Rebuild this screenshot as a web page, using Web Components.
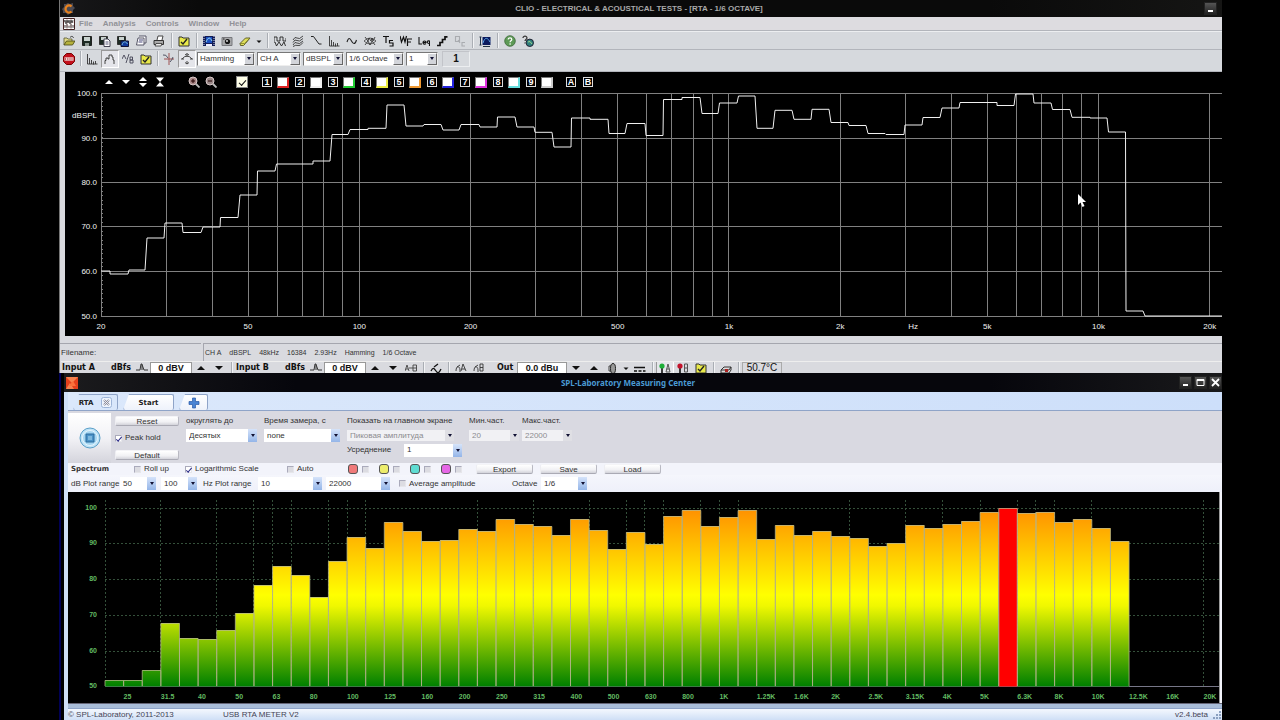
<!DOCTYPE html>
<html lang="en">
<head>
<meta charset="utf-8">
<title>RTA workspace</title>
<style>
  html { background: #000; }
  body { margin: 0; min-height: 100vh; background: #000; overflow: hidden; font: 8px/10px "Liberation Sans", Arial, sans-serif; color: #222; }
</style>
</head>
<body>
<app-desktop></app-desktop>
<script>
const BASE = `*{box-sizing:border-box} button,input,select{font:inherit;color:inherit;margin:0;padding:0;border:0;background:none;border-radius:0}`;
function define(name, css, html) {
  const tpl = document.createElement('template');
  customElements.define(name, class extends HTMLElement {
    connectedCallback() {
      if (this.shadowRoot) return;
      tpl.innerHTML = `<style>${BASE}${css}</style>${typeof html === 'function' ? html(this) : html}`;
      this.attachShadow({ mode: 'open' }).append(tpl.content.cloneNode(true));
    }
  });
}

/* ---------- icons, all on a 12 x 12 grid ---------- */
const note = '<path d="M1 2h3l1 1h6v8H1z" fill="#e9e94a" stroke="#333"/><path d="M3 7l2 2 4-5" fill="none" stroke="#222" stroke-width="1.4"/>';
const disk = '<path d="M1.500 1.500h9v9h-9z" fill="#1d2b24" stroke="#222"/><path d="M3 2h6v4H3z" fill="#c9d2cf"/><path d="M4 8h4v3H4z" fill="#8b9691"/>';
const smallDisk = '<path d="M.5 1.500h8v8h-8z" fill="#1d2b24" stroke="#333"/><path d="M2 2h5v3H2z" fill="#c9d2cf"/>';
const ICONS = {
  app: '<path d="M.5.5h11v11H.5z" fill="#fff" stroke="#422"/><path d="M1 4h10M1 8h10M4 1v10M8 1v10" stroke="#a77" stroke-width=".6"/><path d="M1 4l1-2 1 4 1-4 1 3 1-3 1 4 1-4 1 3 1-3M2 10V7M4 10V6M6 10V8M8 10V6M10 10V7" fill="none" stroke="#333" stroke-width=".8"/>',
  open: '<path d="M1 10V3h3l1 1h4v2" fill="#e3dc8a" stroke="#555533" stroke-width=".8"/><path d="M1 10l2.500-4H12L9.500 10z" fill="#b5b13d" stroke="#444411" stroke-width=".8"/><path d="M7 2.500c2-2 3-1 3.500.5" fill="none" stroke="#333"/>',
  disk,
  diskDoc: smallDisk + '<path d="M5 4h4l2 2v5.500H5z" fill="#fff" stroke="#445"/><path d="M6.500 7h3M6.500 9h3" stroke="#557"/>',
  diskBlue: smallDisk + '<path d="M4 6h7.500v5.500H4z" fill="#123a9c" stroke="#113"/><path d="M5 10c1-4 4-4 5.500-1" fill="none" stroke="#7bd"/>',
  pages: '<path d="M4 1h7v7H9M3 3h6v7H1.500z" fill="#fff" stroke="#556"/><path d="M4 5h4M3.500 7h4" stroke="#447"/>',
  print: '<path d="M4 5l1-4h5L9 5" fill="#fff" stroke="#444"/><path d="M1 5.500h9.500v4H1z" fill="#aaa" stroke="#333"/><path d="M3 8.500h6l-1 2.500H2z" fill="#eee" stroke="#333" stroke-width=".8"/>',
  note,
  film: '<path d="M0 1h12v10H0z" fill="#111c55"/><path d="M3 2h6v6H3z" fill="#1d50c0"/><path d="M3 7c2-5 4-5 6-1" stroke="#9de" fill="none"/><path d="M1 1v10M11 1v10" stroke="#dde" stroke-dasharray="1 1"/><path d="M3 10h6" stroke="#eef" stroke-width="2"/>',
  camera: '<path d="M1 2.500h10v8H1z" fill="#a8a9ab" stroke="#77787c"/><circle cx="6.500" cy="6.500" r="2.600" fill="#151515"/><circle cx="6" cy="6" r=".9" fill="#eee"/><path d="M2 4h1.500" stroke="#222"/>',
  eraser: '<path d="M1 8.500L6.500 3h4.500L6.500 8.500 4.500 10.500H1.500z" fill="#dede5a" stroke="#555522" stroke-width=".9"/><path d="M1 8.500h4.500L11 3" fill="none" stroke="#777722" stroke-width=".7"/>',
  drop: '<path d="M3.500 5.500h5l-2.500 2.500z" fill="#111"/>',
  square: '<path d="M0 6V2h3v4h3V2h3v4h3V3M0 7h1l1.500 4L5 7l2.500 4L10 7l1.500 4" fill="none" stroke="#222" stroke-width=".9"/>',
  waterfall: '<path d="M1 5q2-4 4-2t6-2M1 7.500q2-4 4-2t6-2M1 10q2-4 4-2t6-2M1 11.500q3-2 5-1t5-3" fill="none" stroke="#222" stroke-width=".8"/>',
  slope: '<path d="M1 1.500h2.500L9 9h2.500" fill="none" stroke="#222"/>',
  bars: '<path d="M1.500 1v10h10M3.500 5v6M5.500 7v4M7.500 8.500v3M9.500 8v3" fill="none" stroke="#333" stroke-width=".9"/>',
  sine: '<path d="M1 7c1.500-5 3-4 4.500-1s3.500 4 5-1" fill="none" stroke="#222" stroke-width="1.100"/>',
  noise: '<path d="M0 6q6-6 12 0q-6 6-12 0" fill="none" stroke="#444" stroke-width=".8"/><path d="M1 2l3 4 1-3 2 3 1-3 1 3 2-4M1 10l3-4 2 4 2-4 3 4" fill="none" stroke="#222" stroke-width=".8"/>',
  ts: '<path d="M1 1.500h6M4 1.500V8M11 5.500H7.500v2.500H11v3H7.500" fill="none" stroke="#111" stroke-width="1.200"/>',
  wf: '<path d="M0 1l1.500 6L3.500 2l1.500 5L6.500 1M7.500 11V4H12M7.500 7H11" fill="none" stroke="#111" stroke-width="1.200"/>',
  leq: '<path d="M1 2v7h3M8 8.500c-1 1-3 1-3-1s3-2 3 0H5M11.500 5.500V11M11.500 6c-3-1-3 3 0 2.500" fill="none" stroke="#111" stroke-width="1.100"/>',
  stair: '<path d="M1 10.500h3V7.500h2.500V4.500H9V1.800h2.500" fill="none" stroke="#111" stroke-width="1.700"/>',
  qc: '<path d="M1.500 1.500h4v5h-4zM4 5l2 3M11 7.500H8v3.500h3" fill="none" stroke="#a9acb0" stroke-width="1.100"/>',
  measure: '<path d="M3.500 2h8v8h-8z" fill="#0b1a5e"/><path d="M4 8c2-7 5-5 7-1" stroke="#5aa6e8" fill="none"/><path d="M1.500 2v8M.5 2h2M.5 10h2M4 11.500h7" stroke="#234"/>',
  help: '<circle cx="6" cy="6" r="5.300" fill="#5d9a56" stroke="#3d6a3a" stroke-width=".8"/><path d="M4.200 4.600c0-2.400 3.600-2.200 3.600 0 0 1.300-1.700 1.200-1.700 2.600M6.100 8.300v1.400" fill="none" stroke="#fff" stroke-width="1.200"/>',
  about: '<circle cx="7.800" cy="7.800" r="3.700" fill="#2f7f7c" stroke="#223"/><path d="M6 7q2-2 4 2" stroke="#9ed28a" fill="none"/><path d="M1 3c0-2.500 4-2.500 4 0 0 1-2 1.500-2 3M3 7.500v1" fill="none" stroke="#333" stroke-width="1.200"/>',
  stop: '<path d="M3.500.5h5l3 3v5l-3 3h-5l-3-3v-5z" fill="#c3101c" stroke="#700"/><path d="M1.500 4.300h9v3.400h-9z" fill="#f3d9d9"/><path d="M2.500 4.800v2.400M4.800 4.800v2.400M7 4.800v2.400M9 4.800v2.400" stroke="#a22" stroke-width=".7"/>',
  rta: '<path d="M1 11V7.500h1V5h2v1h1V2h3v2h1v3h1v4" fill="none" stroke="#333" stroke-width=".9"/>',
  ab: '<path d="M0 6l2-4 2 4M7 1L4 10M8 4v6h3V7H8h2.500V4z" fill="none" stroke="#445" stroke-width=".9"/>',
  phase: '<path d="M1 6h10M6 0v12" stroke="#944" stroke-width=".9"/><path d="M0 2q3-1 5 3M7 9q2-2 3-5" stroke="#445" fill="none" stroke-width=".9"/>',
  mic: '<path d="M1 6q5-6 10 0M0 6h3M9 6h3M6 1v3M4 2l2-1.500L8 2M6 8v3M4 9.500l2 1.500 2-1.500" fill="none" stroke="#333" stroke-width=".9"/>',
  up: '<path d="M2 8l4-4 4 4z" fill="currentColor"/>', down: '<path d="M2 4h8L6 8z" fill="currentColor"/>',
  expand: '<path d="M2 5l4-4 4 4zM2 7h8l-4 4z" fill="currentColor"/>',
  shrink: '<path d="M2 1.500h8L6 6zM2 10.500h8L6 6z" fill="currentColor"/>',
  zoomIn: '<circle cx="5" cy="5" r="4" fill="#a88" stroke="#d8c8c8"/><path d="M8 8l3.500 3.500" stroke="#bbb" stroke-width="1.800"/><path d="M3 5h4M5 3v4" stroke="#200"/>',
  zoomOut: '<circle cx="5" cy="5" r="4" fill="#988" stroke="#d8c8c8"/><path d="M8 8l3.500 3.500" stroke="#bbb" stroke-width="1.800"/><path d="M3 5h4" stroke="#200"/>',
  impulse: '<path d="M0 8h4l1-6h1v6M6 2.500L8 8h4" fill="none" stroke="#333"/>',
  aMinusB: '<path d="M0 9l2-6 2 6M1 7h2M4 6h4M8 3v6h3.500V3zM8 6h3.500" fill="none" stroke="#444" stroke-width=".9"/>',
  tone: '<path d="M1 9c2-4 3-3 5 0s3 2 5-2M4 5l4-3" fill="none" stroke="#111" stroke-width="1.300"/>',
  loopA: '<path d="M1 9c0-6 4-5 4-1v2M6 9l2-7 3 7M7 7h3M2 5l3-2" fill="none" stroke="#333" stroke-width=".9"/>',
  loopB: '<path d="M1 9c0-6 4-5 4-1v2M7 2h3v7H7zM7 5.500h3M2 5l3-2" fill="none" stroke="#333" stroke-width=".9"/>',
  speaker: '<path d="M3 4h3M3 9h3M3 4v5" stroke="#444" fill="none"/><ellipse cx="7" cy="6.500" rx="2.500" ry="5" fill="#999" stroke="#222"/>',
  dc: '<path d="M0 5.500h11M0 9h3M4.500 9h3M9 9h2.500" stroke="#111" stroke-width="1.300"/>',
  micA: '<path d="M3 6v6" stroke="#111" stroke-width="1.600"/><circle cx="3" cy="4" r="2.600" fill="#1cae37"/><path d="M7 10l2-8 2 8zM7.500 7h3" fill="none" stroke="#555"/>',
  micB: '<path d="M3 6v6" stroke="#111" stroke-width="1.600"/><circle cx="3" cy="4" r="2.600" fill="#c4132c"/><path d="M7.500 2h3v8h-3zM7.500 6h3" fill="none" stroke="#555"/>',
  chip: '<path d="M1 8l3-3h7L9 8zM1 8v3h8l2-3V5" fill="#ddd" stroke="#333"/><path d="M5 7h3v3H5z" fill="#a22"/>'
};
const svg = (name, size = 12) => `<svg width="${size}" height="${size}" viewBox="0 0 12 12" aria-hidden="true">${ICONS[name]}</svg>`;

define('tool-button', `
  :host{display:block;width:18px;flex:none}
  :host([narrow]){width:10px}
  button{display:flex;width:100%;height:18px;align-items:center;justify-content:center;overflow:hidden}
  :host([pressed]) button{background:#e4e5ea;border:1px solid;border-color:#999 #fff #fff #999}
  svg{flex:none}`,
  el => `<button type="button" aria-label="${el.getAttribute('icon')}">${svg(el.getAttribute('icon'))}</button>`);

define('tool-sep', `:host{display:block;flex:none;width:7px;height:15px}:host([slim]){width:5px}
  i{display:block;width:2px;height:100%;margin:0 auto;border-left:1px solid #aaaeb4;border-right:1px solid #f2f3f5}`, '<i></i>');

define('ui-select', `
  :host{display:block;flex:none;position:relative;height:13px;background:#fff;color:#333}
  select{appearance:none;display:block;width:100%;height:100%;padding:0 10px 0 3px;background:transparent;outline:0;line-height:12px}
  .arrow{position:absolute;right:0;top:0;bottom:0;width:9px;display:flex;align-items:center;justify-content:center;pointer-events:none;background:linear-gradient(#d5e3fa,#94b5e8)}
  .arrow::after{content:"";border:solid transparent;border-width:3px 2px 0;border-top-color:#113}
  :host([classic]){height:14px;border:1px solid;border-color:#777 #eee #eee #777}
  :host([classic]) select{padding:0 11px 0 2px}
  :host([classic]) .arrow{width:10px;background:#d3d5da;border:1px solid;border-color:#fff #666 #666 #fff}
  :host([off]){height:11px;margin:1px 0;color:#8c8c90;background:#f1f1f4}
  :host([off]) select{color:#8c8c90;opacity:1;line-height:10px}
  :host([off]) .arrow{background:#dfdfe4}`,
  el => `<select aria-label="${el.getAttribute('label') || 'Value'}" ${el.hasAttribute('off') ? 'disabled' : ''}><option>${el.getAttribute('value')}</option></select><span class="arrow"></span>`);

define('ui-check', `
  :host{display:block;flex:none}
  label{display:flex;align-items:center;gap:3px;height:10px;white-space:nowrap}
  input{appearance:none;width:7px;height:7px;flex:none;border:1px solid;border-color:#aab #e6e6ea #e6e6ea #aab;background:#dcdce2;display:grid;place-items:center}
  input:checked{background:#fff}
  input:checked::after{content:"";width:5px;height:2px;border:solid #2a2a88;border-width:0 0 1px 1px;transform:rotate(-50deg)}`,
  el => `<label><input type="checkbox" ${el.hasAttribute('checked') ? 'checked' : ''}><slot></slot></label>`);

define('ui-button', `
  :host{display:block;flex:none;width:57px}
  button{display:block;width:100%;height:10px;line-height:9px;text-align:center;background:linear-gradient(#fff,#f1f1f4 60%,#d3d3da);border:1px solid;border-color:#f4f4f7 #b9b9c2 #aaaab4 #eeeef2;border-radius:2px}`,
  '<button type="button"><slot></slot></button>');

define('trace-pair', `
  :host{display:flex;flex:none;width:33px;align-items:center;gap:5px}
  button{width:10px;height:10px;border:1px solid #ddd;color:#fff;font-weight:bold;font-size:9px;line-height:8px;text-align:center}
  input{appearance:none;width:12px;height:11px;background:#fff;border:2px solid var(--trace);border-color:#777 var(--trace) var(--trace) #777;border-width:1px 2px 2px 1px}`,
  el => `<button type="button">${el.getAttribute('n')}</button><input type="checkbox" aria-label="Trace ${el.getAttribute('n')}" style="--trace:${el.getAttribute('color')}">`);

/* ---------- CLIO response plot ---------- */
const TRACE = `101,271 110,271 110,274 128,274 129,270 145,270 147,238 164,238 165,223 182,223 183,232.500 201,232.500 203,227 220,227 220.500,217.500 238,217.500 240,195 257,195 257.500,171 275,171 276.500,164 313,164 313,161 330,161 332,134.500 348,134.500 350,129.500 368,129.500 368,128.300 386,128.300 387,105 404,105 406,126 423,126 424,124.500 441,124.500 443,130 459,130 461,124.500 479,124.500 480,127 497,127 497.500,117 515,117 517,127 534,127 535,132.300 552,132.300 554,147 571,147 571.500,118 590,118 590,119.300 608,119.300 609,133.500 625,133.500 627,123.500 645,123.500 646,135.500 663,135.500 663.500,99.500 682,99.500 682,97.500 700,97.500 702,113.500 718,113.500 719.500,103 737,103 738.500,96 755,96 757,128.300 773,128.300 775,110.300 792,110.300 794,119.300 811,119.300 812,109.300 829,109.300 831,122.500 848,122.500 849,125.500 866,125.500 868,133.500 885,133.500 886,134.500 904,134.500 905,125 922,125 923,117.500 940,117.500 942,108 959,108 960,102.500 997,102.500 997,105.500 1014,105.500 1015.500,94 1033,94 1034,103 1051,103 1052.500,109.500 1070,109.500 1072,117.300 1090,117.300 1090,118 1107,118 1108.500,132 1125.500,132 1126,311 1143,311 1145,316 1222,316`;
define('response-plot', `
  :host{display:block;position:relative;height:243px;padding-left:36px;color:#fff;font-size:8px}
  svg.plot{display:block;width:100%;height:243px;overflow:visible}
  text{fill:#f2f2f2}
  .cursor{position:absolute;left:87%;top:101px;margin-left:6px}`,
  () => {
    const W = 1121, dec = 369.6, pc = f => (Math.log10(f / 20) * dec / W * 100).toFixed(3) + '%';
    let s = '';
    for (let d = 10; d <= 10000; d *= 10) for (let k = 1; k < 10; k++) {
      const f = d * k; if (f < 20 || f > 20000) continue;
      s += `<line x1="${pc(f)}" x2="${pc(f)}" y1="0" y2="223" stroke="#808080"/>`;
    }
    for (let i = 0; i <= 5; i++) {
      const y = [0, 45, 89, 133, 178, 223][i];
      s += `<line x1="0" x2="100%" y1="${y + .5}" y2="${y + .5}" stroke="#808080"/><text x="-4" y="${y + 3}" text-anchor="end">${100 - i * 10}.0</text>`;
    }
    for (let i = 0; i < 50; i++) s += `<line x1="0" x2="2" y1="${(i * 4.46).toFixed(1)}" y2="${(i * 4.46).toFixed(1)}" stroke="#808080"/>`;
    [[20, '20'], [50, '50'], [100, '100'], [200, '200'], [500, '500'], [1000, '1k'], [2000, '2k'], [3150, 'Hz'], [5000, '5k'], [10000, '10k'], [20000, '20k']]
      .forEach(([f, t]) => s += `<text x="${pc(f)}" y="236" text-anchor="middle">${t}</text>`);
    return `<svg class="plot"><g shape-rendering="crispEdges">${s}</g><text x="-4" y="25" text-anchor="end">dBSPL</text>
      <svg width="100%" height="224" viewBox="101 93 1121 224" preserveAspectRatio="none"><polyline points="${TRACE}" fill="none" stroke="#f0f0f0" vector-effect="non-scaling-stroke"/></svg></svg>
      <svg class="cursor" width="9" height="14" viewBox="0 0 9 14"><path d="M0 0v11l2.500-2.500L4.500 13l2-1L4.500 8H8z" fill="#fff"/></svg>`;
  });

/* ---------- SPL-Laboratory bar spectrum ---------- */
const TOPS = [680,680,670,623,638,639,630,613,585,566,575,597,561,537,548,522,531,541,540,529,531,519,524,526,535,519,530,549,532,544,516,510,526,517,510,539,525,535,531,536,538,546,543,525,528,524,521,512,508,513,512,522,519,528,541];
const BANDS = ['25','31.5','40','50','63','80','100','125','160','200','250','315','400','500','630','800','1K','1.25K','1.6K','2K','2.5K','3.15K','4K','5K','6.3K','8K','10K','12.5K','16K','20K'];
define('spectrum-plot', `
  :host{display:block;height:211px;margin-right:2px;padding-left:37px;background:#000;border-right:1px solid #999;font:bold 7px/8px "Liberation Sans",Arial,sans-serif}
  svg{display:block;width:100%;height:211px;overflow:visible}
  text{fill:#62ba62}
  .grid{stroke:#34503a;stroke-dasharray:2 2}`,
  () => {
    const N = 59.83, pc = b => (b / N * 100).toFixed(3) + '%';
    let g = '', bars = '', edges = '', t = '';
    [0,3,6,8,9,10,12,13,14,20,23,26,28,29,30,32,33,34,40,43,45,47,49,50,51,53,59].forEach(b => g += `<line x1="${pc(b)}" x2="${pc(b)}" y1="8" y2="194"/>`);
    for (let i = 0; i < 6; i++) {
      const y = Math.round(15.500 + i * 35.750);
      if (i < 5) g += `<line x1="0" x2="100%" y1="${y}" y2="${y}"/>`;
      t += `<text x="-8" y="${y + 2}" text-anchor="end">${100 - i * 10}</text>`;
    }
    TOPS.forEach((y, i) => {
      const top = y - 492;
      bars += `<rect x="${i}" y="${top}" width="1" height="${194.500 - top}" fill="${i === 48 ? '#f00' : 'url(#heat)'}"/>`;
      edges += `<path d="M${i} 194V${top + .5}H${i + 1}V194"/>`;
    });
    BANDS.forEach((b, i) => t += `<text x="${pc(1 + i * 2)}" y="207">${b}</text>`);
    return `<svg><defs><linearGradient id="heat" gradientUnits="userSpaceOnUse" x1="0" y1="12" x2="0" y2="194"><stop offset="0" stop-color="#ff8a00"/><stop offset=".5" stop-color="#ff0"/><stop offset=".56" stop-color="#f0f800"/><stop offset="1" stop-color="#008000"/></linearGradient></defs>
      <g class="grid" shape-rendering="crispEdges">${g}</g><line x1="0" x2="100%" y1="194.500" y2="194.500" stroke="#778"/>
      <svg width="100%" height="211" viewBox="0 0 ${N} 211" preserveAspectRatio="none">${bars}<g fill="none" stroke="#b5b58c" stroke-opacity=".75">${edges.replace(/<path/g, '<path vector-effect="non-scaling-stroke"')}</g></svg>${t}</svg>`;
  });

const icons = list => list.split(' ').map(n => n === '|' ? '<tool-sep></tool-sep>' : `<tool-button icon="${n}"${n === 'drop' ? ' narrow' : ''}></tool-button>`).join('');

/* ---------- title bar ---------- */
define('title-bar', `
  :host{display:grid;grid-template-columns:1fr auto 1fr;align-items:center;height:17px;padding-left:2px;background:linear-gradient(90deg,#171719,#0a0a0a 12% 80%,#151514);color:#a9a9a9;font:bold 8px/12px "Liberation Sans",Arial,sans-serif;overflow:hidden}
  h1{font:inherit;margin:0;white-space:nowrap}
  .ctl{display:flex;justify-content:flex-end;gap:2px}
  button{width:13px;height:13px;border:1px solid #222;background:linear-gradient(#555,#222);display:grid;place-items:center}
  svg{display:block}`,
  el => `<slot name="icon"></slot><h1><slot></slot></h1><div class="ctl">${el.getAttribute('controls').split(' ').map(c => `<button type="button" aria-label="${c}"><svg width="9" height="9" viewBox="0 0 9 9">${{
    minimise: '<path d="M2 7h5" stroke="#fff" stroke-width="2"/>',
    maximise: '<path d="M1 1.500h7v6H1z" fill="none" stroke="#fff"/><path d="M1 2h7" stroke="#fff" stroke-width="2"/>',
    close: '<path d="M1 1l7 7M8 1L1 8" stroke="#fff" stroke-width="1.800"/>' }[c]}</svg></button>`).join('')}</div>`);

define('clio-window', `
  :host{display:block;background:#d9dadf;border-left:1px solid #777;overflow:hidden}
  title-bar{margin-left:-1px;padding-right:5px}
  nav{display:flex;align-items:center;gap:10px;height:14px;padding-left:3px;background:#dddce0;border-bottom:1px solid #b2b5bb;color:#919197;font:bold 8px/12px "Liberation Sans",Arial,sans-serif}
  nav svg{margin-right:-6px}
  nav a{color:inherit;text-decoration:none}
  .bar{display:flex;align-items:center;background:#d6d9dd;border-bottom:1px solid #b2b5bb}
  .one{height:19px;border-top:1px solid #eceef0}
  .two{height:22px;padding-bottom:4px}
  .two ui-select{margin-left:1px;margin-right:1px}
  .two output{width:28px;height:16px;margin-left:3px;border:1px solid;border-color:#c2c4c9 #eceef0 #eceef0 #c2c4c9;text-align:center;font:bold 10px/14px "Liberation Sans",Arial,sans-serif;color:#111}
  .scope{margin-left:5px;background:#000;height:264px;overflow:hidden}
  .traces{display:flex;align-items:center;height:21px;padding:0 0 1px 35px;color:#fff}
  .traces tool-button{width:17px}
  .traces .gap{width:17px}
  .traces .on{appearance:none;width:12px;height:12px;margin:0 14px 0 17px;background:#ffffe8;border:1px solid #888;display:grid;place-items:center}
  .traces .on::after{content:"";width:6px;height:3px;border:solid #111;border-width:0 0 1px 1px;transform:rotate(-48deg)}
  .traces .ab{width:10px;height:10px;margin-left:7px;border:1px solid #ddd;color:#fff;font-weight:bold;font-size:9px;line-height:8px;text-align:center}
  .status{display:grid;grid-template-columns:141px 1fr;gap:2px;height:18px;margin-top:7px;color:#333}
  .status>div{border-top:1px solid #a5a6ae;display:flex;align-items:center;gap:8px;padding-left:1px;white-space:nowrap}
  .status>div+div{border-left:1px solid #a5a6ae;padding-left:1px;font-size:7px}
  .meters{display:flex;height:12px;align-items:flex-start;margin-left:1px;border-top:1px solid #eee;color:#111;font:bold 8px/11px "DejaVu Sans",sans-serif;overflow:hidden}
  .meters>*{flex:none}
  .meters tool-button{margin-top:-3px}
  .meters .name{width:50px;padding-left:1px;white-space:nowrap}
  .meters .fs{width:23px;white-space:nowrap}
  .meters .imp{width:16px}
  .meters .val{width:42px;height:11px;background:#fff;border:1px solid #999;border-bottom:0;text-align:center;font:bold 9px/10px "Liberation Sans",Arial,sans-serif;white-space:nowrap}
  .meters .out{width:29px;padding-left:9px}
  .meters .val.wide{width:50px}
  .meters .val.temp{width:40px;background:none;border-color:#aaa;font-weight:normal;font-size:10px}`,
  `<title-bar controls="minimise"><svg slot="icon" width="15" height="14" viewBox="0 0 15 14"><path d="M7 1l2 1 3-1v3l2 2-2 2v3l-3 0-2 2-2-2-3 0V9L1 7l2-2V2l2 0z" fill="#4c4a52"/><path d="M10.500 4.500a3.500 3.500 0 1 0 0 5" fill="none" stroke="#e8821e" stroke-width="2.300"/></svg>CLIO - ELECTRICAL &amp; ACOUSTICAL TESTS - [RTA - 1/6 OCTAVE]</title-bar>
  <nav>${svg('app')}<a href="#file">File</a><a href="#analysis">Analysis</a><a href="#controls">Controls</a><a href="#window">Window</a><a href="#help">Help</a></nav>
  <div class="bar one">${icons('open disk diskDoc diskBlue pages print | note | film camera eraser drop | square waterfall slope bars sine noise ts wf leq stair qc | measure | help about')}</div>
  <div class="bar two"><tool-button icon="stop"></tool-button><tool-sep slim></tool-sep><tool-button icon="bars"></tool-button><tool-button icon="rta" pressed></tool-button><tool-button icon="ab"></tool-button><tool-button icon="note"></tool-button><tool-sep slim></tool-sep><tool-button icon="phase"></tool-button><tool-button icon="mic" pressed></tool-button>
    <ui-select classic value="Hamming" style="width:58px"></ui-select><ui-select classic value="CH A" style="width:44px"></ui-select><ui-select classic value="dBSPL" style="width:41px"></ui-select><ui-select classic value="1/6 Octave" style="width:58px"></ui-select><ui-select classic value="1" style="width:32px"></ui-select><output>1</output></div>
  <div class="scope"><div class="traces"><tool-button icon="up"></tool-button><tool-button icon="down"></tool-button><tool-button icon="expand"></tool-button><tool-button icon="shrink"></tool-button><span class="gap"></span><tool-button icon="zoomIn"></tool-button><tool-button icon="zoomOut"></tool-button><input class="on" type="checkbox" checked aria-label="Show trace">
    ${['#d22', '#eee', '#2c3', '#ee4', '#e93', '#22d', '#d3d', '#6dd', '#ccc'].map((c, i) => `<trace-pair n="${i + 1}" color="${c}"></trace-pair>`).join('')}<button class="ab" type="button">A</button><button class="ab" type="button">B</button></div>
    <response-plot></response-plot></div>
  <div class="status"><div>Filename:</div><div><span>CH A</span><span>dBSPL</span><span>48kHz</span><span>16384</span><span>2.93Hz</span><span>Hamming</span><span>1/6 Octave</span></div></div>
  <div class="meters"><span class="name">Input A</span><span class="fs">dBfs</span><tool-button class="imp" icon="impulse"></tool-button><output class="val">0 dBV</output><tool-button icon="up"></tool-button><tool-button icon="down"></tool-button><tool-sep></tool-sep>
    <span class="name">Input B</span><span class="fs">dBfs</span><tool-button class="imp" icon="impulse"></tool-button><output class="val">0 dBV</output><tool-button icon="up"></tool-button><tool-button icon="down"></tool-button><tool-button icon="aMinusB"></tool-button>${icons('| tone | loopA loopB')}
    <span class="out">Out</span><output class="val wide">0.0 dBu</output><tool-button icon="down"></tool-button><tool-button icon="up"></tool-button>${icons('speaker drop dc |')}<tool-button icon="micA" pressed></tool-button>${icons('micB note | chip |')}<output class="val temp">50.7°C</output></div>`);

define('spl-window', `
  :host{display:block;border-left:4px solid #cfe0f8;background:#f3f4fb;color:#333}
  title-bar{margin-left:-4px;height:19px;color:#4a9ad4;font:bold 8px/12px "Noto Sans","Open Sans",sans-serif;background:linear-gradient(90deg,#1b1b1d,#06060c 20% 80%,#19191b)}
  .caption{padding-right:32px}
  .tabs{display:flex;align-items:flex-end;gap:5px;height:19px;padding-left:5px;background:linear-gradient(90deg,#dbe8fb,#cddffa);border-bottom:1px solid #8fa4c8;font:bold 7px/14px "DejaVu Sans",sans-serif;color:#222}
  .tabs button{height:16px;display:flex;align-items:center;justify-content:center;gap:8px;background:linear-gradient(#fff,#eef2fb);border:1px solid #8fa4c8;border-bottom:0;border-radius:2px;clip-path:polygon(6px 0,100% 0,100% 100%,0 100%)}
  .tabs .rta{width:45px;background:#d9e7fb}.tabs .start{width:51px}.tabs .add{width:29px}
  .panel{display:flex;height:52px;background:#d9d9e1}
  .go{width:43px;height:50px;margin-top:2px;background:linear-gradient(#fff,#f2f2f6 50%,#d4d4dc);display:grid;place-items:center}
  .col{display:flex;flex-direction:column;padding-top:5px;margin-left:7px;gap:3px}
  .col span{line-height:10px;white-space:nowrap}
  .actions{margin-left:4px;width:64px;gap:7px}
  .actions ui-button{width:64px}
  .avg{display:flex;align-items:center;height:10px}
  .avg span{width:57px}
  .wide{width:115px}
  .opts{display:flex;align-items:center;height:12px;padding-left:3px}
  .opts.low{height:17px;background:linear-gradient(#f5f6fc,#eef0fa)}
  .opts>*{flex:none}
  .opts b{font:bold 7px/10px "DejaVu Sans",sans-serif}
  .dot{width:10px;height:10px;border:1px solid #555;border-radius:3px;margin-right:4px}
  .dot+ui-check{width:17px}
  .opts ui-button{margin-right:7px}
  .opts ui-button:first-of-type{margin-left:4px}
  footer{display:flex;align-items:center;height:12px;border-top:1px solid #8fa4c8;background:linear-gradient(#f4f8fe,#cfdff6);color:#445}
  footer span:first-child{width:155px}
  footer span:last-of-type{margin-left:auto;margin-right:4px}
  .edge{height:5px;background:#a9bdd8;border-top:1px solid #667}`,
  `<title-bar controls="minimise maximise close"><svg slot="icon" width="12" height="12" viewBox="0 0 12 12"><path d="M0 0h12v12H0z" fill="#e5401c"/><path d="M0 0h12L6 6zM0 12l4-6 4 6z" fill="#f5824f"/><path d="M3 9l4-5 3 5z" fill="#f9703a"/></svg><span class="caption">SPL-Laboratory Measuring Center</span></title-bar>
  <div class="tabs"><button class="rta" type="button">RTA<svg width="11" height="11" viewBox="0 0 11 11"><rect x=".5" y=".5" width="10" height="10" rx="2" fill="#eef4fd" stroke="#9db4d8"/><path d="M3 3l5 5M8 3L3 8" stroke="#889" stroke-width="2"/><path d="M3 3l5 5M8 3L3 8" stroke="#fff" stroke-width=".8"/></svg></button><button class="start" type="button">Start</button><button class="add" type="button" aria-label="New tab"><svg width="12" height="12" viewBox="0 0 12 12"><path d="M4.500 1h3v3.500H11v3H7.500V11h-3V7.500H1v-3h3.500z" fill="#4a84d4" stroke="#2a5aa8" stroke-width=".7"/></svg></button></div>
  <div class="panel"><button class="go" type="button" aria-label="Stop"><svg width="22" height="22" viewBox="0 0 22 22"><circle cx="11" cy="11" r="10" fill="#bfe3f7" stroke="#5a9fc8"/><circle cx="11" cy="11" r="7.500" fill="#a5d6f2" stroke="#e6f5fc"/><path d="M7 7h8v8H7z" fill="#4b93c8" stroke="#2a6a9c"/><path d="M9 9h4v4H9z" fill="#7db8de"/></svg></button>
    <div class="col actions"><ui-button>Reset</ui-button><ui-check checked>Peak hold</ui-check><ui-button>Default</ui-button></div>
    <div class="col"><span>округлять до</span><ui-select value="Десятых" style="width:71px"></ui-select></div>
    <div class="col"><span>Время замера, с</span><ui-select value="none" style="width:76px"></ui-select></div>
    <div class="col wide"><span>Показать на главном экране</span><ui-select off value="Пиковая амплитуда" style="width:107px"></ui-select><div class="avg"><span>Усреднение</span><ui-select value="1" style="width:58px"></ui-select></div></div>
    <div class="col"><span>Мин.част.</span><ui-select off value="20" style="width:50px"></ui-select></div>
    <div class="col" style="margin-left:3px"><span>Макс.част.</span><ui-select off value="22000" style="width:50px"></ui-select></div></div>
  <div class="opts"><b style="width:63px">Spectrum</b><ui-check style="width:51px">Roll up</ui-check><ui-check checked style="width:102px">Logarithmic Scale</ui-check><ui-check style="width:61px">Auto</ui-check>
    ${['#f07a7a', '#eded6c', '#5fdcd2', '#e667e6'].map(c => `<span class="dot" style="background:${c}"></span><ui-check></ui-check>`).join('')}
    <ui-button>Export</ui-button><ui-button>Save</ui-button><ui-button>Load</ui-button></div>
  <div class="opts low"><span style="width:49px">dB Plot range</span><ui-select value="50" style="width:36px"></ui-select><ui-select value="100" style="width:36px;margin-left:5px"></ui-select><span style="width:56px;padding-left:6px">Hz Plot range</span><ui-select value="10" style="width:64px;margin-left:5px"></ui-select><ui-select value="22000" style="width:64px;margin-left:4px"></ui-select><ui-check style="width:113px;margin-left:9px">Average amplitude</ui-check><span style="width:29px">Octave</span><ui-select value="1/6" style="width:46px"></ui-select></div>
  <spectrum-plot></spectrum-plot><div class="edge"></div>
  <footer><span>© SPL-Laboratory, 2011-2013</span><span>USB RTA METER V2</span><span>v2.4.beta</span><svg width="10" height="10" viewBox="0 0 10 10"><path d="M7 1h2v2H7zM4 4h2v2H4zM7 4h2v2H7zM1 7h2v2H1zM4 7h2v2H4zM7 7h2v2H7z" fill="#8ba0c0"/></svg></footer>`);

define('app-desktop', `
  :host{display:block;padding:0 58px 0 59px}
  .lower{display:grid;grid-template-columns:2px 3px minmax(0,1fr);background:#000}
  .lower i{background:#000055}
  .lower spl-window{grid-column:3}`,
  `<clio-window></clio-window><div class="lower"><i></i><spl-window></spl-window></div>`);
</script>
</body>
</html>
